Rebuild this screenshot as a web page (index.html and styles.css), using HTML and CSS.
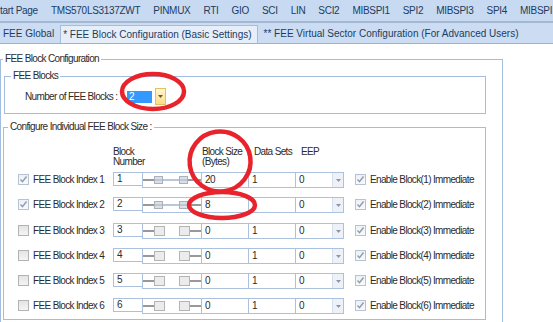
FILE: index.html
```html
<!DOCTYPE HTML>
<html lang="en">
<head>
    <title>FEE Block Configuration</title>
    <link rel="stylesheet" href="styles.css">
</head>
<body>
    <div class="menubar">
        <span>tart Page</span><span>TMS570LS3137ZWT</span><span>PINMUX</span><span>RTI</span><span>GIO</span><span>SCI</span><span>LIN</span><span>SCI2</span><span>MIBSPI1</span><span>SPI2</span><span>MIBSPI3</span><span>SPI4</span><span>MIBSPI</span>
    </div>

    <div class="tabstrip">
        <span class="tab">FEE Global</span>
        <span class="tab active">* FEE Block Configuration (Basic Settings)</span>
        <span class="tab">** FEE Virtual Sector Configuration (For Advanced Users)</span>
    </div>

    <div class="page">
        <fieldset class="outer">
            <legend>FEE Block Configuration</legend>

            <fieldset class="blocks">
                <legend>FEE Blocks</legend>
                <div class="num-row">
                    <span class="num-label">Number of FEE Blocks :</span>
                    <div class="combo">
                        <span class="combo-sel">2</span>
                        <span class="combo-btn"><svg width="5" height="3" viewBox="0 0 5 3"><path d="M0 0h5L2.5 3z" fill="#6b5a2a"/></svg></span>
                    </div>
                </div>
            </fieldset>

            <fieldset class="sizes">
                <legend>Configure Individual FEE Block Size :</legend>

                <div class="head">
                    <span class="h-name"></span>
                    <span class="h-num">Block<br>Number</span>
                    <span class="h-size">Block Size<br>(Bytes)</span>
                    <span class="h-sets">Data Sets</span>
                    <span class="h-eep">EEP</span>
                </div>

                <div class="row">
                    <span class="c-name"><span class="chk on"><svg width="9" height="9" viewBox="0 0 9 9"><path d="M1.5 4.5l2 2.2L7.5 1.5" fill="none" stroke="#8d9cb0" stroke-width="1.4"/></svg></span>FEE Block Index 1</span>
                    <span class="num">1</span>
                    <span class="track"><svg width="58" height="14" viewBox="0 0 58 14"><path d="M0 7h11M44 7h14" stroke="#333" stroke-width="1"/><path d="M19 7h17" stroke="#b9c7da" stroke-width="2"/><rect x="11.5" y="3.5" width="8" height="7" fill="#dcdfe4" stroke="#a9b1bc"/><rect x="36.5" y="3.5" width="8" height="7" fill="#dcdfe4" stroke="#a9b1bc"/><path d="M12 7h7M37 7h7" stroke="#9fb1c8"/></svg></span>
                    <span class="tb">20</span>
                    <span class="tb">1</span>
                    <span class="eep"><span class="eep-val">0</span><span class="eep-btn"><svg width="5" height="3" viewBox="0 0 5 3"><path d="M0 0h5L2.5 3z" fill="#8a96a6"/></svg></span></span>
                    <span class="c-en"><span class="chk on"><svg width="9" height="9" viewBox="0 0 9 9"><path d="M1.5 4.5l2 2.2L7.5 1.5" fill="none" stroke="#8d9cb0" stroke-width="1.4"/></svg></span>Enable Block(1) Immediate</span>
                </div>

                <div class="row">
                    <span class="c-name"><span class="chk on"><svg width="9" height="9" viewBox="0 0 9 9"><path d="M1.5 4.5l2 2.2L7.5 1.5" fill="none" stroke="#8d9cb0" stroke-width="1.4"/></svg></span>FEE Block Index 2</span>
                    <span class="num">2</span>
                    <span class="track"><svg width="58" height="14" viewBox="0 0 58 14"><path d="M0 7h11M44 7h14" stroke="#333" stroke-width="1"/><path d="M19 7h17" stroke="#b9c7da" stroke-width="2"/><rect x="11.5" y="3.5" width="8" height="7" fill="#dcdfe4" stroke="#a9b1bc"/><rect x="36.5" y="3.5" width="8" height="7" fill="#dcdfe4" stroke="#a9b1bc"/><path d="M12 7h7M37 7h7" stroke="#9fb1c8"/></svg></span>
                    <span class="tb">8</span>
                    <span class="tb"></span>
                    <span class="eep"><span class="eep-val">0</span><span class="eep-btn"><svg width="5" height="3" viewBox="0 0 5 3"><path d="M0 0h5L2.5 3z" fill="#8a96a6"/></svg></span></span>
                    <span class="c-en"><span class="chk on"><svg width="9" height="9" viewBox="0 0 9 9"><path d="M1.5 4.5l2 2.2L7.5 1.5" fill="none" stroke="#8d9cb0" stroke-width="1.4"/></svg></span>Enable Block(2) Immediate</span>
                </div>

                <div class="row">
                    <span class="c-name"><span class="chk"></span>FEE Block Index 3</span>
                    <span class="num">3</span>
                    <span class="track"><svg width="58" height="14" viewBox="0 0 58 14"><path d="M0 7h11M47 7h11" stroke="#333" stroke-width="1"/><rect x="11.5" y="2.5" width="10" height="9" fill="#ececec" stroke="#b4b4b4"/><rect x="36.5" y="2.5" width="10" height="9" fill="#ececec" stroke="#b4b4b4"/></svg></span>
                    <span class="tb">0</span>
                    <span class="tb">1</span>
                    <span class="eep"><span class="eep-val">0</span><span class="eep-btn"><svg width="5" height="3" viewBox="0 0 5 3"><path d="M0 0h5L2.5 3z" fill="#8a96a6"/></svg></span></span>
                    <span class="c-en"><span class="chk on"><svg width="9" height="9" viewBox="0 0 9 9"><path d="M1.5 4.5l2 2.2L7.5 1.5" fill="none" stroke="#8d9cb0" stroke-width="1.4"/></svg></span>Enable Block(3) Immediate</span>
                </div>

                <div class="row">
                    <span class="c-name"><span class="chk"></span>FEE Block Index 4</span>
                    <span class="num">4</span>
                    <span class="track"><svg width="58" height="14" viewBox="0 0 58 14"><path d="M0 7h11M47 7h11" stroke="#333" stroke-width="1"/><rect x="11.5" y="2.5" width="10" height="9" fill="#ececec" stroke="#b4b4b4"/><rect x="36.5" y="2.5" width="10" height="9" fill="#ececec" stroke="#b4b4b4"/></svg></span>
                    <span class="tb">0</span>
                    <span class="tb">1</span>
                    <span class="eep"><span class="eep-val">0</span><span class="eep-btn"><svg width="5" height="3" viewBox="0 0 5 3"><path d="M0 0h5L2.5 3z" fill="#8a96a6"/></svg></span></span>
                    <span class="c-en"><span class="chk on"><svg width="9" height="9" viewBox="0 0 9 9"><path d="M1.5 4.5l2 2.2L7.5 1.5" fill="none" stroke="#8d9cb0" stroke-width="1.4"/></svg></span>Enable Block(4) Immediate</span>
                </div>

                <div class="row">
                    <span class="c-name"><span class="chk"></span>FEE Block Index 5</span>
                    <span class="num">5</span>
                    <span class="track"><svg width="58" height="14" viewBox="0 0 58 14"><path d="M0 7h11M47 7h11" stroke="#333" stroke-width="1"/><rect x="11.5" y="2.5" width="10" height="9" fill="#ececec" stroke="#b4b4b4"/><rect x="36.5" y="2.5" width="10" height="9" fill="#ececec" stroke="#b4b4b4"/></svg></span>
                    <span class="tb">0</span>
                    <span class="tb">1</span>
                    <span class="eep"><span class="eep-val">0</span><span class="eep-btn"><svg width="5" height="3" viewBox="0 0 5 3"><path d="M0 0h5L2.5 3z" fill="#8a96a6"/></svg></span></span>
                    <span class="c-en"><span class="chk on"><svg width="9" height="9" viewBox="0 0 9 9"><path d="M1.5 4.5l2 2.2L7.5 1.5" fill="none" stroke="#8d9cb0" stroke-width="1.4"/></svg></span>Enable Block(5) Immediate</span>
                </div>

                <div class="row">
                    <span class="c-name"><span class="chk"></span>FEE Block Index 6</span>
                    <span class="num">6</span>
                    <span class="track"><svg width="58" height="14" viewBox="0 0 58 14"><path d="M0 7h11M47 7h11" stroke="#333" stroke-width="1"/><rect x="11.5" y="2.5" width="10" height="9" fill="#ececec" stroke="#b4b4b4"/><rect x="36.5" y="2.5" width="10" height="9" fill="#ececec" stroke="#b4b4b4"/></svg></span>
                    <span class="tb">0</span>
                    <span class="tb">1</span>
                    <span class="eep"><span class="eep-val">0</span><span class="eep-btn"><svg width="5" height="3" viewBox="0 0 5 3"><path d="M0 0h5L2.5 3z" fill="#8a96a6"/></svg></span></span>
                    <span class="c-en"><span class="chk on"><svg width="9" height="9" viewBox="0 0 9 9"><path d="M1.5 4.5l2 2.2L7.5 1.5" fill="none" stroke="#8d9cb0" stroke-width="1.4"/></svg></span>Enable Block(6) Immediate</span>
                </div>
            </fieldset>
        </fieldset>
    </div>

    <!-- red annotation rings drawn over the screenshot -->
    <svg class="marks" width="553" height="322" viewBox="0 0 553 322">
        <ellipse cx="153" cy="91.5" rx="31" ry="17.5"/>
        <ellipse cx="220" cy="161.5" rx="30.5" ry="30" transform="rotate(-8 220 161)"/>
        <ellipse cx="222" cy="205" rx="33" ry="13"/>
    </svg>
</body>
</html>
```

FILE: styles.css
```css
* {
    box-sizing: border-box;
}
body {
    margin: 0;
    width: 553px;
    height: 322px;
    overflow: hidden;
    position: relative;
    background-color: #fff;
    font-family: "Liberation Sans", Arial, sans-serif;
    font-size: 10px;
    letter-spacing: -0.65px;
    color: #2b2b2b;
    white-space: nowrap;
}
.menubar {
    height: 23px;
    background-color: #c8daf2;
    border-bottom: 2px solid #a4b8d1;
    display: flex;
    align-items: center;
    gap: 13px;
    overflow: hidden;
    letter-spacing: -0.3px;
    color: #213c60;
}
.tabstrip {
    height: 21px;
    background-color: #cbdcf3;
    border-bottom: 1px solid #9db2cd;
    display: flex;
    align-items: flex-end;
    overflow: hidden;
    letter-spacing: 0;
    color: #213c60;
}
.tab {
    height: 18px;
    line-height: 17px;
    padding: 0 3px;
}
.tab.active {
    background-color: #e6eefa;
    border: 1px solid #a7bcd6;
    border-bottom: none;
    padding: 0 5px 0 2px;
    margin: 0 3px 0 3px;
}
.page {
    padding-top: 8px;
}
fieldset {
    margin: 0;
    padding: 0;
    min-width: 0;
    border: 1px solid #a3bde0;
}
legend {
    padding: 0 2px;
    line-height: 14px;
}
.outer {
    width: 503px;
    height: 290px;
    padding-left: 3px;
    border-bottom: none;
}
.outer > legend {
    margin-left: -1px;
}
.blocks {
    width: 482px;
    height: 45px;
    margin-top: 3px;
    padding-left: 6px;
}
.num-row {
    display: flex;
    align-items: center;
    height: 17px;
    margin: 5px 0 0 14px;
}
.num-label {
    width: 99px;
}
.combo {
    display: flex;
    width: 42px;
    height: 17px;
    background-color: #fff;
}
.combo-sel {
    width: 26px;
    height: 12px;
    margin: 3px 3px 0 3px;
    padding-left: 2px;
    line-height: 12px;
    background-color: #3399ff;
    color: #fff;
}
.combo-btn {
    width: 12px;
    height: 17px;
    display: flex;
    align-items: center;
    justify-content: center;
    border: 1px solid #e2c15e;
    background: linear-gradient(#fff6d6, #ffdd85);
}
.sizes {
    width: 483px;
    height: 200px;
    margin: 6px 0 0 -1px;
    padding-left: 4px;
}
.head {
    display: flex;
    height: 20px;
    margin-top: 13px;
    line-height: 10px;
}
.h-name {
    width: 105px;
}
.h-num {
    width: 89px;
}
.h-size {
    width: 52px;
}
.h-sets {
    width: 47px;
}
.row {
    display: flex;
    align-items: flex-start;
    height: 25px;
}
.head + .row {
    margin-top: 5px;
}
.row:nth-child(5) {
    margin-top: 1px;
}
.c-name {
    width: 105px;
    height: 14px;
    display: flex;
    align-items: center;
    gap: 4px;
    padding-left: 10px;
}
.chk {
    width: 11px;
    height: 11px;
    border: 1px solid #b3b3b3;
    background: linear-gradient(#e4e4e4, #f4f4f4);
    display: flex;
    align-items: center;
    justify-content: center;
    flex-shrink: 0;
}
.chk.on {
    border-color: #b7c3d3;
    background: linear-gradient(#eef1f5, #f8f9fb);
}
.num {
    width: 30px;
    height: 14px;
    margin-right: -1px;
    padding-left: 3px;
    line-height: 12px;
    border: 1px solid #acc1dd;
}
.track {
    width: 60px;
    height: 16px;
    margin-right: -1px;
    border: 1px solid #acc1dd;
}
.track svg {
    display: block;
}
.tb {
    width: 48px;
    height: 16px;
    margin-right: -1px;
    padding-left: 3px;
    line-height: 14px;
    border: 1px solid #acc1dd;
}
.eep {
    width: 49px;
    height: 16px;
    display: flex;
    border: 1px solid #acc1dd;
}
.eep-val {
    flex: 1;
    padding-left: 3px;
    line-height: 14px;
}
.eep-btn {
    width: 11px;
    display: flex;
    align-items: center;
    justify-content: center;
    background-color: #eef2f8;
    border-left: 1px solid #d6e0ed;
}
.c-en {
    height: 14px;
    display: flex;
    align-items: center;
    gap: 4px;
    margin-left: 11px;
}
.marks {
    position: absolute;
    left: 0;
    top: 0;
    pointer-events: none;
}
.marks ellipse {
    fill: none;
    stroke: #e8232b;
    stroke-width: 4.5;
}
```
